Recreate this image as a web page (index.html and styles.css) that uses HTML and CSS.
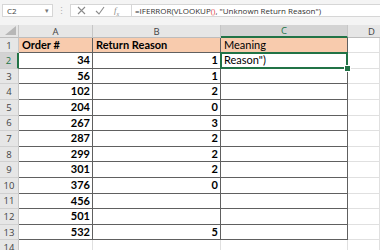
FILE: index.html
```html
<!DOCTYPE html>
<html>
<head>
    <title>Return Reasons</title>
    <link rel="stylesheet" href="styles.css">
</head>
<body>
    <div class="formula-bar">
        <div class="name-box"><span>C2</span><span class="arrow">&#9662;</span></div>
        <div class="grip">&#8942;</div>
        <div class="fx-buttons">
            <svg width="9" height="9" viewBox="0 0 9 9"><path d="M1 1 L8 8 M8 1 L1 8" stroke="#8a8a8a" stroke-width="1.1" fill="none"/></svg>
            <svg width="10" height="9" viewBox="0 0 10 9"><path d="M1 5 L4 8 L9 1" stroke="#8a8a8a" stroke-width="1.1" fill="none"/></svg>
            <span class="fx">f<sub>x</sub></span>
        </div>
        <div class="formula">=IFERROR(VLOOKUP<span class="paren">()</span>, "Unknown Return Reason")</div>
    </div>

    <div class="sheet">
        <div class="corner"></div>
        <div class="col-head">A</div>
        <div class="col-head">B</div>
        <div class="col-head active">C</div>
        <div class="col-head last">D</div>

        <div class="row-head">1</div>
        <div class="cell head bold">Order #</div>
        <div class="cell head bold">Return Reason</div>
        <div class="cell head">Meaning</div>
        <div class="cell out"></div>

        <div class="row-head active">2</div>
        <div class="cell num">34</div>
        <div class="cell num">1</div>
        <div class="cell current">Reason")</div>
        <div class="cell out"></div>

        <div class="row-head">3</div>
        <div class="cell num">56</div>
        <div class="cell num">1</div>
        <div class="cell"></div>
        <div class="cell out"></div>

        <div class="row-head">4</div>
        <div class="cell num">102</div>
        <div class="cell num">2</div>
        <div class="cell"></div>
        <div class="cell out"></div>

        <div class="row-head">5</div>
        <div class="cell num">204</div>
        <div class="cell num">0</div>
        <div class="cell"></div>
        <div class="cell out"></div>

        <div class="row-head">6</div>
        <div class="cell num">267</div>
        <div class="cell num">3</div>
        <div class="cell"></div>
        <div class="cell out"></div>

        <div class="row-head">7</div>
        <div class="cell num">287</div>
        <div class="cell num">2</div>
        <div class="cell"></div>
        <div class="cell out"></div>

        <div class="row-head">8</div>
        <div class="cell num">299</div>
        <div class="cell num">2</div>
        <div class="cell"></div>
        <div class="cell out"></div>

        <div class="row-head">9</div>
        <div class="cell num">301</div>
        <div class="cell num">2</div>
        <div class="cell"></div>
        <div class="cell out"></div>

        <div class="row-head">10</div>
        <div class="cell num">376</div>
        <div class="cell num">0</div>
        <div class="cell"></div>
        <div class="cell out"></div>

        <div class="row-head">11</div>
        <div class="cell num">456</div>
        <div class="cell num"></div>
        <div class="cell"></div>
        <div class="cell out"></div>

        <div class="row-head">12</div>
        <div class="cell num">501</div>
        <div class="cell num"></div>
        <div class="cell"></div>
        <div class="cell out"></div>

        <div class="row-head">13</div>
        <div class="cell num">532</div>
        <div class="cell num">5</div>
        <div class="cell"></div>
        <div class="cell out"></div>

        <div class="row-head">14</div>
        <div class="cell out"></div>
        <div class="cell out"></div>
        <div class="cell out"></div>
        <div class="cell out"></div>
    </div>
</body>
</html>
```

FILE: styles.css
```css
body {
    margin: 0;
    background: #fff;
    font-family: Lato, "Open Sans", sans-serif;
    overflow: hidden;
}
.formula-bar {
    display: flex;
    align-items: flex-start;
    height: 25px;
    padding-top: 4px;
    box-sizing: border-box;
    background: #f4f4f4;
    font-family: "Open Sans", sans-serif;
    font-size: 8px;
    color: #444;
}
.name-box {
    display: flex;
    justify-content: space-between;
    align-items: center;
    width: 51px;
    height: 13px;
    margin-left: 2px;
    padding: 0 3px 0 4px;
    box-sizing: border-box;
    background: #fff;
    border: 1px solid #d6d6d6;
}
.arrow {
    font-size: 7px;
    color: #777;
}
.grip {
    width: 17px;
    text-align: center;
    line-height: 13px;
    color: #b0b0b0;
    font-size: 9px;
}
.fx-buttons {
    display: flex;
    align-items: center;
    gap: 9px;
    width: 61px;
    height: 13px;
    padding-left: 6px;
    box-sizing: border-box;
    background: #fff;
    border: 1px solid #d6d6d6;
    border-right: none;
}
.fx {
    font-family: "Liberation Serif", serif;
    font-style: italic;
    font-size: 9px;
    color: #8a8a8a;
}
.fx sub {
    font-size: 6px;
}
.formula {
    flex: 1;
    height: 13px;
    line-height: 11px;
    padding-left: 3px;
    box-sizing: border-box;
    background: #fff;
    border: 1px solid #d6d6d6;
    border-right: none;
    color: #333;
    white-space: nowrap;
}
.paren {
    color: #e0464b;
}

.sheet {
    display: grid;
    grid-template-columns: 19px 74px 128px 127px 1fr;
    grid-template-rows: 13px 15.3px repeat(13, 15.6px);
}
.corner {
    position: relative;
    background: #e6e6e6;
    border-right: 1px solid #c6c6c6;
    border-bottom: 1px solid #bdbdbd;
    box-sizing: border-box;
}
.corner::after {
    content: "";
    position: absolute;
    right: 2px;
    bottom: 2px;
    width: 0;
    height: 0;
    border-left: 11px solid transparent;
    border-bottom: 9px solid #b7b7b7;
}
.col-head,
.row-head {
    background: #e6e6e6;
    color: #444;
    font-family: "Open Sans", sans-serif;
    font-size: 9.5px;
    text-align: center;
    box-sizing: border-box;
    border-right: 1px solid #c6c6c6;
    border-bottom: 1px solid #bdbdbd;
    display: flex;
    align-items: center;
    justify-content: center;
}
.col-head.last {
    border-right: none;
    justify-content: flex-start;
    padding-left: 20px;
}
.col-head.active {
    background: #d3d3d3;
    color: #217346;
    border-bottom: 2px solid #217346;
}
.row-head {
    border-bottom-color: #d0d0d0;
}
.row-head.active {
    background: #d3d3d3;
    color: #217346;
    border-right: 2px solid #217346;
}
.cell {
    box-sizing: border-box;
    border-right: 1px solid #606060;
    border-bottom: 1px solid #606060;
    font-size: 11px;
    line-height: 14px;
    padding: 0 3px;
    white-space: nowrap;
    color: #000;
}
.cell.head {
    background: #f8cbad;
}
.bold {
    font-weight: bold;
}
.num {
    font-weight: bold;
    text-align: right;
    padding-right: 2px;
}
.cell.out {
    border-right: 1px solid #e0e0e0;
    border-bottom: 1px solid #e0e0e0;
}
.current {
    position: relative;
}
.current::after {
    content: "";
    position: absolute;
    left: -1px;
    top: -1px;
    right: -1px;
    bottom: -1px;
    border: 2px solid #217346;
}
.current::before {
    content: "";
    position: absolute;
    right: -4px;
    bottom: -4px;
    width: 5px;
    height: 5px;
    background: #217346;
    border: 1px solid #fff;
    z-index: 1;
}
```
